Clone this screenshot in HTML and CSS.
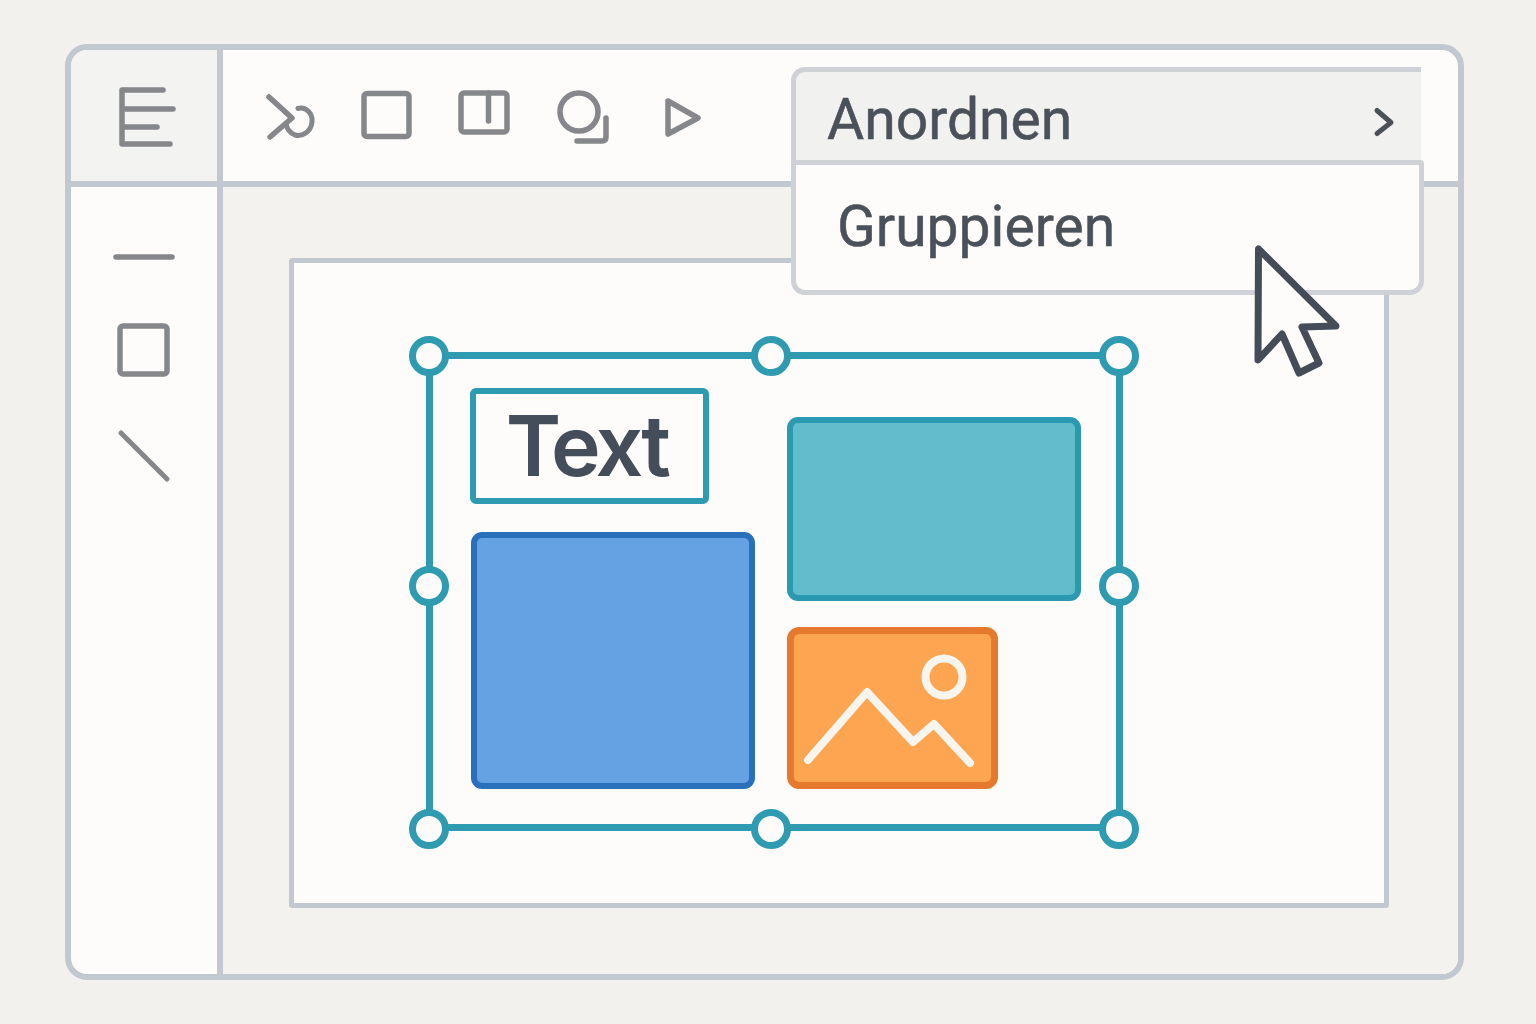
FILE: index.html
```html
<!DOCTYPE html>
<html lang="de">
<head>
<meta charset="utf-8">
<title>Anordnen</title>
<link rel="stylesheet" href="styles.css">
</head>
<body>
<div class="window">
  <div class="corner">
    <svg class="icon ic-e" viewBox="110 80 72 72"><path d="M163 90H122V144H170M122 109H173M122 127H157"/></svg>
  </div>
  <div class="toolbar">
    <svg class="icon tb tb1" viewBox="264 90 52 54"><path d="M269 97L292 118L270 137"/><path class="thin" d="M298 108.500C306 106 313 114 312 122C311 132 302 137 295 135C290 133 287 129 286 124"/></svg>
    <svg class="icon tb tb2" viewBox="360 90 53 54"><rect x="364" y="93.500" width="45" height="43" rx="3"/></svg>
    <svg class="icon tb tb3" viewBox="457 90 55 54"><rect x="461" y="93" width="46" height="39" rx="3"/><path d="M488.500 93V121"/></svg>
    <svg class="icon tb tb4" viewBox="556 90 54 54"><circle cx="579" cy="112" r="19"/><path d="M606 118V137Q606 141 602 141H577"/></svg>
    <svg class="icon tb tb5" viewBox="664 90 37 54"><path d="M668 101L698 118L668 134Z"/></svg>
  </div>
  <div class="sidebar">
    <svg class="icon sd sd1" viewBox="110 247 68 24"><path d="M116 257H172"/></svg>
    <svg class="icon sd sd2" viewBox="110 315 68 70"><rect x="120" y="326" width="47" height="48" rx="3"/></svg>
    <svg class="icon sd sd3" viewBox="110 429 68 56"><path class="thin" d="M121 433L167 479"/></svg>
  </div>
  <div class="stage">
    <div class="canvas">
      <div class="selection">
        <div class="obj obj-text"><span>Text</span></div>
        <div class="obj obj-teal"></div>
        <div class="obj obj-blue"></div>
        <div class="obj obj-orange">
          <svg class="picture" viewBox="794 634 197 148"><circle cx="944" cy="677" r="18.500"/><path d="M808 760L867 692L913 742L934 724L970 763"/></svg>
        </div>
        <span class="handle h-tl"></span><span class="handle h-tm"></span><span class="handle h-tr"></span>
        <span class="handle h-ml"></span><span class="handle h-mr"></span>
        <span class="handle h-bl"></span><span class="handle h-bm"></span><span class="handle h-br"></span>
      </div>
    </div>
  </div>
  <div class="menu">
    <div class="menu-head"><span>Anordnen</span>
      <svg class="chev" viewBox="1370 101.500 28 36"><path d="M1377 110L1391 122L1377 133"/></svg>
    </div>
    <div class="menu-panel"><span>Gruppieren</span></div>
  </div>
  <svg class="cursor" viewBox="1250 240 96 140"><path d="M1258.500 249L1258 360L1282 334L1299 373L1319 363L1302 327L1336 326Z"/></svg>
</div>
</body>
</html>
```
FILE: styles.css
```css
* { box-sizing: border-box; }
html, body { margin: 0; height: 100%; }
body {
  background: #f3f1ed;
  padding: 44px 0 0 65px;
  font-family: Roboto, "Liberation Sans", sans-serif;
  overflow: hidden;
}
.window {
  position: relative;
  width: 1399px;
  height: 936px;
  background: #fdfcfa;
  border: 6px solid #c2c8d0;
  border-radius: 22px;
  display: grid;
  grid-template-columns: 152px 1fr;
  grid-template-rows: 137px 1fr;
}
.corner {
  background: #f3f3f1;
  border-right: 6px solid #c2c8d0;
  border-bottom: 6px solid #c2c8d0;
  border-top-left-radius: 16px;
  display: flex;
  align-items: flex-start;
  padding: 30px 0 0 39px;
}
.icon { display: block; fill: none; stroke: #85878b; stroke-width: 5.500; stroke-linecap: round; stroke-linejoin: round; }
.icon .thin { stroke-width: 5; }
.ic-e { width: 72px; height: 72px; }
.toolbar {
  border-bottom: 6px solid #c2c8d0;
  display: flex;
  align-items: flex-start;
  gap: 44px;
  padding: 40px 0 0 41px;
}
.tb { height: 54px; }
.tb1 { width: 52px; }
.tb2 { width: 53px; }
.tb3 { width: 55px; }
.tb4 { width: 54px; }
.tb5 { width: 37px; margin-left: 10px; }
.sidebar {
  border-right: 6px solid #c2c8d0;
  display: flex;
  flex-direction: column;
  align-items: flex-start;
  gap: 44px;
  padding: 60px 0 0 39px;
}
.sd { width: 68px; }
.sd1 { height: 24px; }
.sd2 { height: 70px; }
.sd3 { height: 56px; }
.stage {
  background: #f3f2ee;
  padding: 71px 69px 66px 66px;
  border-bottom-right-radius: 16px;
}
.canvas {
  position: relative;
  height: 100%;
  background: #fdfcfa;
  border: 5px solid #c2c8d0;
  border-radius: 3px;
}
.selection {
  position: absolute;
  left: 132px;
  top: 89px;
  width: 697px;
  height: 479px;
  border: 7px solid #2f9bb1;
}
.obj { position: absolute; }
.obj-text {
  left: 37px; top: 29px; width: 239px; height: 116px;
  background: #fdfcfa;
  border: 6px solid #2f9bb1;
  border-radius: 6px;
  display: flex;
  align-items: center;
  justify-content: center;
  padding-right: 6px;
  color: #444e5b;
  font-family: Inter, Roboto, sans-serif;
  font-weight: 600;
  font-size: 84px;
  letter-spacing: -3.500px;
  line-height: 1;
}
.obj-teal {
  left: 354px; top: 58px; width: 294px; height: 184px;
  background: #63bccc;
  border: 6px solid #2b9ab0;
  border-radius: 11px;
}
.obj-blue {
  left: 38px; top: 173px; width: 284px; height: 257px;
  background: #64a2e4;
  border: 6px solid #2a6fba;
  border-radius: 11px;
}
.obj-orange {
  left: 354px; top: 268px; width: 211px; height: 162px;
  background: #fda551;
  border: 7px solid #e57a2e;
  border-radius: 12px;
}
.picture { display: block; width: 197px; height: 148px; fill: none; stroke: #f8f5ef; stroke-width: 8; stroke-linecap: round; stroke-linejoin: round; }
.handle {
  position: absolute;
  width: 40px;
  height: 40px;
  background: #fdfcfa;
  border: 7px solid #2f9bb1;
  border-radius: 50%;
}
.h-tl { left: -24px; top: -23px; }
.h-tm { left: 318px; top: -23px; }
.h-tr { left: 666px; top: -23px; }
.h-ml { left: -24px; top: 207px; }
.h-mr { left: 666px; top: 207px; }
.h-bl { left: -24px; top: 450px; }
.h-bm { left: 318px; top: 450px; }
.h-br { left: 666px; top: 450px; }
.menu {
  position: absolute;
  left: 720px;
  top: 17px;
  width: 630px;
  color: #4a5159;
  font-size: 57px;
  line-height: 66px;
  -webkit-text-stroke: 0.500px #4a5159;
}
.menu-head {
  height: 98px;
  background: #f1f1ef;
  border-top: 5px solid #ced2d7;
  border-left: 5px solid #ced2d7;
  border-top-left-radius: 14px;
  display: flex;
  align-items: center;
  justify-content: space-between;
  padding: 2px 23px 0 31px;
}
.chev { width: 28px; height: 36px; fill: none; stroke: #4a5159; stroke-width: 5; stroke-linecap: round; stroke-linejoin: round; }
.menu-panel {
  margin-top: -5px;
  margin-right: -3px;
  height: 135px;
  background: #fdfcfa;
  border: 5px solid #ced2d7;
  border-radius: 4px 4px 14px 14px;
  padding: 29px 0 0 41px;
}
.cursor {
  position: absolute;
  left: 1179px;
  top: 190px;
  width: 96px;
  height: 140px;
  fill: #fdfcfa;
  stroke: #434c57;
  stroke-width: 7;
  stroke-linejoin: round;
}
```
